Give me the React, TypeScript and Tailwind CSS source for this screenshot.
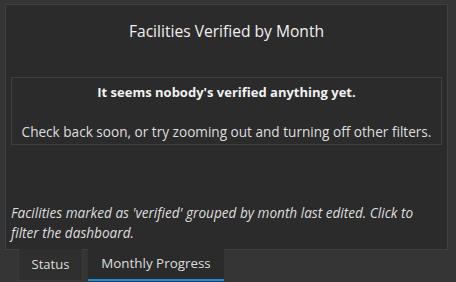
import React from 'react';

const font = { fontFamily: '"Open Sans", "Noto Sans", sans-serif' };

const App = () => {
  return (
    <div className="w-[456px] h-[282px] bg-[#353535] overflow-hidden text-[#dedede]" style={font}>
      <div className="ml-[5px] mt-[4px] w-[443px] h-[246px] border border-[#404040] bg-[#2b2b2b] flex flex-col">
        {/* Header */}
        <div className="h-[52px] flex items-center justify-center pt-[2px]">
          <h2 className="text-[15.6px] text-[#f0f0f0]">Facilities Verified by Month</h2>
        </div>

        {/* Empty state */}
        <div className="mx-[5px] mt-[20px] border border-[#404040] pt-[4px] pb-[2px] text-center text-[13.6px] leading-[20px]">
          <p className="font-bold text-[13px] text-[#f2f2f2]">It seems nobody's verified anything yet.</p>
          <p>&nbsp;</p>
          <p>Check back soon, or try zooming out and turning off other filters.</p>
        </div>

        {/* Description */}
        <p className="mt-auto px-[5px] pb-[6px] text-[13.6px] leading-[20px] italic">
          Facilities marked as 'verified' grouped by month last edited. Click to filter the dashboard.
        </p>
      </div>

      {/* Tabs */}
      <div className="flex gap-[5px] pl-[18px] -mt-[1px]">
        <div className="w-[65px] h-[32px] bg-[#2f2f2f] border border-[#3b3b3b] border-t-0 flex items-center justify-center text-[13px]">
          Status
        </div>
        <div className="w-[136px] h-[32px] bg-[#2b2b2b] border-b-2 border-[#1c8ee0] flex items-center justify-center text-[13.4px] pb-[2px]">
          Monthly Progress
        </div>
      </div>
    </div>
  );
};

export default App;
